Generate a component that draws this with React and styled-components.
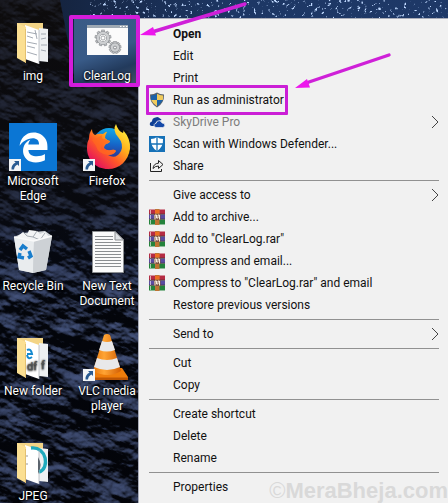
import React from 'react';
import styled, { createGlobalStyle, css } from 'styled-components';
import { FaEdgeLegacy } from 'react-icons/fa';

const GlobalStyle = createGlobalStyle`
  *,
  *::after {
    box-sizing: border-box;
  }

  body {
    margin: 0;
    font-family: Roboto, 'Noto Sans', sans-serif;
    font-size: 12px;
  }

  button {
    font: inherit;
    border: none;
    background: none;
    cursor: default;
  }
`;

const Desktop = styled.main`
  position: relative;
  display: flex;
  height: 100vh;
  overflow: hidden;
  background: #10131f;
`;

const WallpaperSvg = styled.svg`
  position: absolute;
  inset: 0;
  width: 100%;
  height: 100%;
`;

const Shortcuts = styled.section`
  position: relative;
  z-index: 2;
  display: grid;
  flex: none;
  grid-template-columns: 66px 66px;
  grid-auto-rows: 105px;
  column-gap: 8px;
  align-items: start;
  margin-right: -2px;
  padding-top: 18px;
`;

const Shortcut = styled.button`
  position: relative;
  display: flex;
  flex-direction: column;
  align-items: center;
  gap: 3px;
  padding: 0;
  color: #fff;
  line-height: 15px;
  text-shadow: 0 1px 2px #000, 0 0 2px #000;

  ${({ $selected }) =>
    $selected &&
    css`
      background: linear-gradient(160deg, #3b5b86, #385a87 50%, #223a5c 75%, #465266);

      &::after {
        content: '';
        position: absolute;
        inset: -3px 0 -3px -5px;
        border: 4px solid #d41cdb;
        border-radius: 2px;
      }
    `}
`;

const IconBox = styled.span`
  position: relative;
  display: block;
  width: 48px;
  height: 48px;

  > svg {
    display: block;
  }
`;

const LinkBadge = styled.span`
  position: absolute;
  left: 0;
  bottom: 0;
  width: 12px;
  height: 12px;
  background: #f2f4f6;
`;

const EdgeTile = styled.span`
  display: flex;
  align-items: center;
  justify-content: center;
  width: 48px;
  height: 48px;
  background: #0b76d4;
  color: #fff;
  font-size: 31px;
`;

const Menu = styled.nav`
  position: relative;
  z-index: 1;
  flex: 1;
  min-width: 0;
  margin-top: 18px;
  padding: 4px 0 0;
  border: solid #a9acb8;
  border-width: 1px 0 0 1px;
  background: #f1f1f1;
`;

const MenuItem = styled.button`
  position: relative;
  display: flex;
  align-items: center;
  gap: 8px;
  width: 100%;
  height: 22px;
  padding: 0 9px 0 10px;
  color: ${({ disabled }) => (disabled ? '#7c7c7c' : '#111')};
  font-weight: ${({ $bold }) => ($bold ? 700 : 400)};
  text-align: left;
  white-space: nowrap;

  &:hover {
    background: ${({ $marked }) => ($marked ? 'none' : '#fff')};
  }

  ${({ $marked }) =>
    $marked &&
    css`
      &::after {
        content: '';
        position: absolute;
        top: -4px;
        left: 7px;
        width: 142px;
        height: 30px;
        border: 3px solid #cb1fd6;
        border-radius: 1px;
      }
    `}
`;

const MenuIcon = styled.span`
  flex: none;
  width: 16px;
  height: 16px;

  svg {
    display: block;
  }
`;

const MenuLabel = styled.span`
  flex: 1;
`;

const Separator = styled.hr`
  height: 1px;
  margin: 3px 9px 3px 10px;
  border: none;
  background: #919191;
`;

const Arrows = styled.svg`
  position: absolute;
  top: 0;
  left: 0;
  z-index: 3;
  pointer-events: none;
`;

const Watermark = styled.span`
  position: absolute;
  right: 0;
  bottom: 0;
  z-index: 2;
  color: #d9d9d9;
  font-family: 'Liberation Sans', Arial, sans-serif;
  font-size: 22px;
  font-weight: 700;
  line-height: 24px;
  pointer-events: none;
`;

const Copyright = styled.span`
  font-weight: 400;
`;

const Wallpaper = () => (
  <WallpaperSvg aria-hidden="true">
    <defs>
      <filter id="rock" x="0" y="0" width="100%" height="100%" colorInterpolationFilters="sRGB">
        <feTurbulence type="fractalNoise" baseFrequency="0.02 0.035" numOctaves="6" seed="21" result="noise" />
        <feColorMatrix in="noise" values="0 0 0 0 0  0 0 0 0 0  0 0 0 0 0  1.5 0.5 0 0 -0.5" result="height" />
        <feDiffuseLighting in="height" surfaceScale="11" diffuseConstant="0.85" lightingColor="#6478ae">
          <feDistantLight azimuth="240" elevation="16" />
        </feDiffuseLighting>
      </filter>
      <filter id="stars" x="0" y="0" width="100%" height="100%" colorInterpolationFilters="sRGB">
        <feTurbulence type="fractalNoise" baseFrequency="0.28" numOctaves="3" seed="4" />
        <feColorMatrix values="0 0 0 0 0.75  0 0 0 0 0.85  0 0 0 0 1  7 0 0 0 -4.4" />
      </filter>
      <linearGradient id="shade" x1="0" y1="0" x2="0" y2="1">
        <stop offset="0" stopColor="#110f10" stopOpacity="0.78" />
        <stop offset="0.4" stopColor="#0d0f18" stopOpacity="0.6" />
        <stop offset="0.6" stopColor="#101a38" stopOpacity="0.2" />
        <stop offset="1" stopColor="#0b1024" stopOpacity="0.25" />
      </linearGradient>
      <linearGradient id="sky" x1="0" y1="0" x2="1" y2="0">
        <stop offset="0" stopColor="#152440" />
        <stop offset="0.06" stopColor="#1d3765" />
        <stop offset="1" stopColor="#2b4880" />
      </linearGradient>
    </defs>
    <g transform="rotate(24)">
      <rect x="-60" y="-200" width="500" height="800" filter="url(#rock)" />
    </g>
    <rect width="100%" height="100%" fill="url(#shade)" />
    <path d="M60 0H3000V60H140L74 75Q68 40 60 0Z" fill="url(#sky)" />
    <rect x="90" width="100%" height="20" filter="url(#stars)" />
  </WallpaperSvg>
);

const ShortcutBadge = () => (
  <LinkBadge>
    <svg width="12" height="12" viewBox="0 0 12 12">
      <path d="M5 2H10V7L8.4 5.4Q5.3 7 5 10.5H2.5Q2 6 6.6 3.6Z" fill="#285a91" />
    </svg>
  </LinkBadge>
);

const FolderIcon = ({ children }) => (
  <svg width="48" height="48" viewBox="0 0 48 48">
    <path d="M8 5H34V40H8Z" fill="#f3d486" />
    <path d="M30 10L39 11V44L30 43Z" fill="#eef0f2" />
    <path d="M16 7L30 12V46L16 41Z" fill="#fff" />
    {children}
    <path d="M30 12V46" stroke="#aeb4bb" strokeWidth="0.8" />
    <path d="M8 5L17 9V45L8 40Z" fill="#fbdf92" />
    <path d="M16.5 11V45" stroke="#ddb868" strokeWidth="0.8" />
  </svg>
);

const ImageFolder = () => (
  <FolderIcon>
    <path
      d="M18 14L28 16M18 18L24 20M18 24L28 26M18 28L26 30M18 34L28 37M32 16H37M32 21L37 20M32 27H38M32 32L37 33M26 12L28 21"
      stroke="#9aa0aa"
      strokeWidth="0.9"
    />
  </FolderIcon>
);

const PdfFolder = () => (
  <FolderIcon>
    <path d="M18 21H23Q22 15 18 17M18 22Q19 27 23 24" stroke="#1489cf" strokeWidth="2" fill="none" />
    <text x="18" y="37" fontSize="11" fill="#555">df</text>
    <text x="32" y="36" fontSize="11" fill="#555">f</text>
  </FolderIcon>
);

const JpegFolder = () => (
  <FolderIcon>
    <path d="M29 19Q34 27 29 36Z" fill="#26303b" />
    <path d="M22 10C38 8 41 31 30 34" stroke="#20aabd" strokeWidth="3.4" fill="none" />
    <path d="M18 17V19M18 25V27" stroke="#999" />
  </FolderIcon>
);

const gearTeeth = [0, 40, 80, 120, 160, 200, 240, 280, 320];

const Gear = ({ x, y, r }) => (
  <g transform={`translate(${x} ${y})`}>
    {gearTeeth.map((angle) => (
      <rect
        key={angle}
        x="-1.3"
        y={-r - 2}
        width="2.6"
        height="4"
        fill="#c4c6c9"
        stroke="#85888c"
        strokeWidth="0.6"
        transform={`rotate(${angle})`}
      />
    ))}
    <circle r={r - 1} fill="none" stroke="#85888c" strokeWidth="3.6" />
    <circle r={r - 1} fill="none" stroke="#cdcfd1" strokeWidth="2.6" />
    <circle r={r / 3} fill="#fff" stroke="#85888c" strokeWidth="0.7" />
  </g>
);

const BatchIcon = () => (
  <svg width="48" height="48" viewBox="0 0 48 48">
    <path d="M4 7H45V37H4Z" fill="#fbfbfb" />
    <path d="M4 7H45V10H4Z" fill="#9fa9b3" />
    <path d="M37 8.5H38.5M40 8.5H41.5M43 8.5H44.5" stroke="#fff" />
    <Gear x={20} y={20} r={6} />
    <Gear x={32} y={29.5} r={4} />
  </svg>
);

const FirefoxIcon = () => (
  <svg width="48" height="48" viewBox="0 0 48 48">
    <defs>
      <linearGradient id="fox" x1="0.9" y1="0.1" x2="0.2" y2="0.9">
        <stop offset="0" stopColor="#ffef3e" />
        <stop offset="0.35" stopColor="#ffb01c" />
        <stop offset="0.65" stopColor="#ff5a26" />
        <stop offset="1" stopColor="#e6145c" />
      </linearGradient>
      <linearGradient id="globe" x1="0.5" y1="0" x2="0.4" y2="1">
        <stop offset="0" stopColor="#12a8e8" />
        <stop offset="0.5" stopColor="#1565c8" />
        <stop offset="1" stopColor="#332a83" />
      </linearGradient>
    </defs>
    <circle cx="26" cy="21" r="16" fill="url(#globe)" />
    <path
      d="M9 6C9 9 10 11 12 12Q16 10 20 11Q24 8 24 9Q22 12 22 15Q25 18 27 18Q27 20 23 21Q21 23 21 25Q24 28 28 27Q32 26 33 28Q31 32 25 32Q33 37 38 28Q41 21 35 14Q29 7 33 1Q35 8 40 10Q41 8 40 7Q48 16 47 26C45 38 37 46 25 46C13 46 4 37 4 25Q4 19 6 16Q6 10 9 6Z"
      fill="url(#fox)"
    />
    <path d="M9 17Q15 15 19 12Q18 17 22 16Q25 18 27 18Q26 21 21 21Q18 23 18 26Q22 29 28 27Q32 26 33 28Q31 32 25 32Q15 31 13 23Z" fill="#ff6a1f" opacity="0.7" />
  </svg>
);

const RecycleBinIcon = () => (
  <svg width="48" height="48" viewBox="0 0 48 48">
    <path d="M5 9L14 5L36 3L43 8L37 42L24 45L10 42Z" fill="#d2d6da" />
    <path d="M8 9L14 4L18 7L20 2L28 3L31 6L36 4L40 9L30 14L18 15Z" fill="#f3f4f5" />
    <path d="M14 4L18 8L24 9L28 3M24 9L31 12L36 5" stroke="#a5abb2" fill="none" />
    <path d="M5 9L25 13L24 45L10 42Z" fill="#e9ecee" />
    <path d="M25 13L43 8L37 42L24 45Z" fill="#cdd1d5" />
    <path d="M5 9L25 13L43 8" stroke="#fafafa" fill="none" strokeWidth="1.4" />
    <g fill="none" stroke="#187dcc" strokeWidth="3.4">
      <path d="M11 22L14 18L18 21" />
      <path d="M20 23L22 28L19 30" />
      <path d="M15 30L10 29L11 25" />
    </g>
  </svg>
);

const documentLines = [8, 11, 14, 17, 20, 23, 26, 29, 32, 35, 38];

const TextDocumentIcon = () => (
  <svg width="48" height="48" viewBox="0 0 48 48">
    <path d="M9.500 3.500H32L40.500 12V44.500H9.500Z" fill="#fbfbfb" stroke="#8d9093" />
    {documentLines.map((y) => (
      <path key={y} d={`M12 ${y + 0.5}H${y < 12 ? 30 : 38}`} stroke="#8b8e91" />
    ))}
    <path d="M32 3.500V12H40.500Z" fill="#e1e4e7" stroke="#8d9093" />
  </svg>
);

const VlcIcon = () => (
  <svg width="48" height="48" viewBox="0 0 48 48">
    <defs>
      <linearGradient id="cone">
        <stop offset="0" stopColor="#e7780e" />
        <stop offset="0.4" stopColor="#ffa434" />
        <stop offset="1" stopColor="#d35f04" />
      </linearGradient>
    </defs>
    <path d="M13 35H39L45 44V47H6V43Z" fill="#ee7d0b" />
    <path d="M6 44.500H45V47H6Z" fill="#bd5604" />
    <path d="M21 2Q24 0 27 2L38 38Q25 46 10 38Z" fill="url(#cone)" />
    <path d="M19 8Q24 10 29 8L32 17Q24 20 16 17Z" fill="#e8e8ea" />
    <path d="M14 25Q24 29 34 25L37 34Q24 40 11 34Z" fill="#e8e8ea" />
  </svg>
);

const ShieldIcon = () => (
  <svg width="16" height="16" viewBox="0 0 16 16">
    <path d="M8 0.500Q11 2.500 15 2.500Q15.500 11 8 15.500Q0.500 11 1 2.500Q5 2.500 8 0.500Z" fill="#5b6268" />
    <path d="M8 1.800V8H2.200Q1.800 5.500 2 3.500Q5.500 3.300 8 1.800Z" fill="#1c62a8" />
    <path d="M8 1.800V8H13.800Q14.200 5.500 14 3.500Q10.500 3.300 8 1.800Z" fill="#f0cb5c" />
    <path d="M2.200 8H8V14.200Q3.500 11.500 2.200 8Z" fill="#f0cb5c" />
    <path d="M13.800 8H8V14.200Q12.500 11.500 13.800 8Z" fill="#1c62a8" />
  </svg>
);

const SkyDriveIcon = () => (
  <svg width="16" height="16" viewBox="0 0 16 16">
    <path d="M3 12Q0 11.500 1 9Q1.500 7.500 3 7.500Q3 4 6.500 3.500Q9 2 11 4.500Q12.500 5 12.500 6L7 8L6 12Z" fill="#0f3f94" />
    <path d="M7 13.500Q4.500 13 5 10.800Q5.500 9.500 7 9.400Q7.500 6.500 10.300 6.700Q12.500 7 13 9Q15.800 9 15.800 11.300Q15.600 13.500 13.500 13.500Z" fill="#1549a8" stroke="#f1f1f1" strokeWidth="0.7" />
  </svg>
);

const DefenderIcon = () => (
  <svg width="16" height="16" viewBox="0 0 16 16">
    <path d="M0 0H16V16H0Z" fill="#1671b7" />
    <path d="M8 1Q10.500 3 14 3Q14.500 11 8 15Q1.500 11 2 3Q5.500 3 8 1Z" fill="#fff" />
    <path d="M8 1V15M2 8H14" stroke="#1671b7" strokeWidth="1.3" />
  </svg>
);

const ShareIcon = () => (
  <svg width="16" height="16" viewBox="0 0 16 16" fill="none" stroke="#222">
    <path d="M1.500 5V13.500H12.500V11" />
    <path d="M4 10.500Q4.500 5.500 9.500 5.200V2.500L14 6.500L9.500 10.500V8Q6 8 4 10.500Z" />
  </svg>
);

const RarIcon = () => (
  <svg width="16" height="16" viewBox="0 0 16 16">
    <path d="M0 0.500H16V5H0Z" fill="#b52b43" />
    <path d="M0 5.500H16V10H0Z" fill="#5a4ba0" />
    <path d="M0 10.500H16V15.500H0Z" fill="#24823b" />
    <path d="M0 5.200H16M0 10.200H16" stroke="#39282c" strokeWidth="0.8" />
    <path d="M1.500 1V5M1.500 6V10M1.500 11V15" stroke="#fff" opacity="0.6" />
    <path d="M6 0H10.500V16H6Z" fill="#bd7433" />
    <path d="M5 5H11.500V11H5Z" fill="#7d5240" />
    <path d="M6 10.500V6H7.500V9H9V6H10.500V10.500" stroke="#f5eee1" fill="none" />
    <path d="M6 1H10.500V4H6Z" fill="#ed6e22" />
  </svg>
);

const Chevron = () => (
  <svg width="8" height="14" viewBox="0 0 8 14" fill="none" stroke="#444">
    <path d="M1 1L7 7L1 13" />
  </svg>
);

const shortcuts = [
  { name: 'img', icon: <ImageFolder /> },
  { name: 'ClearLog', icon: <BatchIcon />, selected: true },
  { name: 'Microsoft Edge', icon: <EdgeTile><FaEdgeLegacy /></EdgeTile>, linked: true },
  { name: 'Firefox', icon: <FirefoxIcon />, linked: true },
  { name: 'Recycle Bin', icon: <RecycleBinIcon /> },
  { name: 'New Text Document', icon: <TextDocumentIcon /> },
  { name: 'New folder', icon: <PdfFolder /> },
  { name: 'VLC media player', icon: <VlcIcon />, linked: true },
  { name: 'JPEG', icon: <JpegFolder /> },
];

const menuGroups = [
  [
    { label: 'Open', bold: true },
    { label: 'Edit' },
    { label: 'Print' },
    { label: 'Run as administrator', icon: <ShieldIcon />, marked: true },
    { label: 'SkyDrive Pro', icon: <SkyDriveIcon />, disabled: true, submenu: true },
    { label: 'Scan with Windows Defender...', icon: <DefenderIcon /> },
    { label: 'Share', icon: <ShareIcon /> },
  ],
  [
    { label: 'Give access to', submenu: true },
    { label: 'Add to archive...', icon: <RarIcon /> },
    { label: 'Add to "ClearLog.rar"', icon: <RarIcon /> },
    { label: 'Compress and email...', icon: <RarIcon /> },
    { label: 'Compress to "ClearLog.rar" and email', icon: <RarIcon /> },
    { label: 'Restore previous versions' },
  ],
  [{ label: 'Send to', submenu: true }],
  [{ label: 'Cut' }, { label: 'Copy' }],
  [{ label: 'Create shortcut' }, { label: 'Delete' }, { label: 'Rename' }],
  [{ label: 'Properties' }],
];

const App = () => (
  <>
    <GlobalStyle />
    <Desktop>
      <Wallpaper />
      <Shortcuts aria-label="Desktop">
        {shortcuts.map(({ name, icon, linked, selected }) => (
          <Shortcut key={name} type="button" $selected={selected}>
            <IconBox>
              {icon}
              {linked && <ShortcutBadge />}
            </IconBox>
            <span>{name}</span>
          </Shortcut>
        ))}
      </Shortcuts>
      <Menu aria-label="Context menu">
        {menuGroups.map((items, index) => (
          <React.Fragment key={items[0].label}>
            {index > 0 && <Separator />}
            {items.map(({ label, icon, bold, disabled, marked, submenu }) => (
              <MenuItem key={label} type="button" disabled={disabled} $bold={bold} $marked={marked}>
                <MenuIcon>{icon}</MenuIcon>
                <MenuLabel>{label}</MenuLabel>
                {submenu && <Chevron />}
              </MenuItem>
            ))}
          </React.Fragment>
        ))}
      </Menu>
      <Arrows width="400" height="100" viewBox="0 0 400 100" aria-hidden="true">
        <path d="M245 4L152 32M389 55L306 83" stroke="#cf20d8" strokeWidth="3.4" strokeLinecap="round" />
        <path d="M140 35L153 27L156 35.500ZM295 88L307 79L310 87.500Z" fill="#ed16ed" />
      </Arrows>
      <Watermark>
        <Copyright>©</Copyright>MeraBheja.com
      </Watermark>
    </Desktop>
  </>
);

export default App;
